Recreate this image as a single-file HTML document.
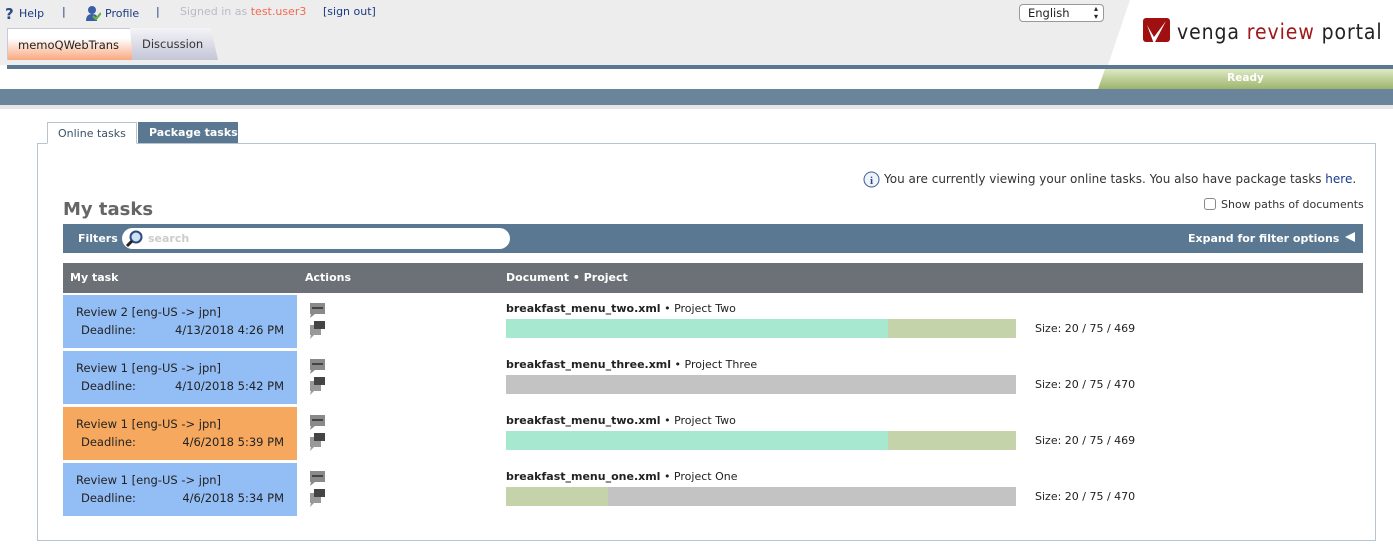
<!DOCTYPE html>
<html><head><meta charset="utf-8"><style>
*{margin:0;padding:0;box-sizing:border-box}
body{width:1393px;height:544px;overflow:hidden;background:#fff;font-family:"DejaVu Sans",Verdana,sans-serif;font-size:11px;color:#222;position:relative}
.a{position:absolute;white-space:nowrap}
.top{left:0;top:0;width:1393px;height:65px;background:#ededed}
.logoarea{left:1108px;top:0;width:285px;height:65px;background:#fff;clip-path:polygon(22px 0,100% 0,100% 100%,0 100%)}
.link{font-size:11px;color:#1a3a80}
.row{left:63px;width:234px;height:53px;background:#93bdf5;font-size:11.5px;color:#222}
.row .t{position:absolute;left:13px;top:10px}
.row .d{position:absolute;left:18px;top:28px}
.row .dt{position:absolute;right:13px;top:28px}
.doc{left:506px;font-size:11px}
.bar{left:506px;width:510px;height:19px;background:#c3c3c3}
.size{left:1035px;font-size:11px}
</style></head><body>
<div class="a top"></div>
<div class="a logoarea"></div>
<div class="a" style="left:5px;top:5px;font:bold 15px 'DejaVu Sans';color:#2a4a8a">?</div>
<div class="a link" style="left:19px;top:7px">Help</div>
<div class="a link" style="left:62px;top:5px">|</div>
<svg class="a" style="left:85px;top:5px" width="16" height="16"><circle cx="7" cy="5" r="4" fill="#3a5ea8"/><path d="M1 16 Q1 9 7 9 Q12 9 12 12 L12 16Z" fill="#3a5ea8"/><path d="M8 11 l3 3 l5 -6" stroke="#6ab040" stroke-width="2.2" fill="none"/></svg>
<div class="a link" style="left:105px;top:7px">Profile</div>
<div class="a link" style="left:156px;top:5px">|</div>
<div class="a" style="left:180px;top:5px;color:#b8bcc4">Signed in as <span style="color:#f06a50">test.user3</span></div>
<div class="a link" style="left:323px;top:5px">[sign out]</div>
<div class="a" style="left:7px;top:28px;width:126px;height:32px;background:linear-gradient(#fff 30%,#f9a880);border:1px solid #c9c9d9;border-bottom:none;font-size:11.5px;padding:9px 0 0 10px">memoQWebTrans</div>
<div class="a" style="left:130px;top:28px;width:88px;height:32px;background:linear-gradient(#f4f4f8,#c4c6d8);clip-path:polygon(0 0,92% 0,100% 100%,3% 100%);font-size:11.5px;padding:9px 0 0 12px;color:#333">Discussion</div>
<div class="a" style="left:1019px;top:4px;width:85px;height:18px;border:1px solid #999;border-radius:4px;background:#fff;font-size:11.5px;padding:1px 0 0 8px">English<span style="position:absolute;right:5px;top:0;font-size:8px;line-height:8px">▴<br>▾</span></div>
<svg class="a" style="left:1142px;top:17px" width="30" height="33"><rect x="1" y="1" width="27" height="24" rx="3" fill="#a01010"/><path d="M5 8 L12 20 L24 4 L12 27 Z" fill="#fff"/></svg>
<div class="a" style="left:1177px;top:20px;font:21px 'DejaVu Sans';letter-spacing:1px;color:#222;transform:scaleX(0.9);transform-origin:left">venga <span style="color:#a01818">review</span> portal</div>
<div class="a" style="left:7px;top:65px;width:1386px;height:4px;background:#5a7891"></div>
<div class="a" style="left:1098px;top:69px;width:295px;height:20px;background:linear-gradient(#dfe9c4,#9db56d);clip-path:polygon(7px 0,100% 0,100% 100%,0 100%);color:#fff;font-weight:bold;font-size:10.5px;text-align:center;padding-top:3px">Ready</div>
<div class="a" style="left:0;top:89px;width:1393px;height:16px;background:#6a849c"></div>
<div class="a" style="left:0;top:105px;width:1393px;height:4px;background:#e6e6e6"></div>
<div class="a" style="left:37px;top:143px;width:1339px;height:398px;border:1px solid #b7c3cf"></div>
<div class="a" style="left:47px;top:122px;width:90px;height:22px;border:1px solid #b7c3cf;border-bottom:1px solid #fff;background:#fff;color:#3a5268;font-size:11px;padding:4px 0 0 10px">Online tasks</div>
<div class="a" style="left:138px;top:122px;width:100px;height:21px;background:#5a7891;color:#fff;font-weight:bold;font-size:11px;padding:4px 0 0 11px">Package tasks</div>
<svg class="a" style="left:863px;top:171px" width="17" height="17"><circle cx="8.5" cy="8.5" r="7.5" fill="#eef3fa" stroke="#3a5a98"/><text x="8.5" y="13" font-size="11" font-weight="bold" text-anchor="middle" fill="#2a4a88" font-family="Liberation Serif">i</text></svg>
<div class="a" style="left:884px;top:172px;font-size:12px;color:#333">You are currently viewing your online tasks. You also have package tasks <span style="color:#1a3a90">here</span>.</div>
<div class="a" style="left:1204px;top:198px;width:12px;height:12px;border:1px solid #888;border-radius:3px"></div>
<div class="a" style="left:1221px;top:198px;font-size:11px;color:#333">Show paths of documents</div>
<div class="a" style="left:63px;top:199px;font:bold 18px 'DejaVu Sans';color:#666">My tasks</div>
<div class="a" style="left:63px;top:224px;width:1300px;height:29px;background:#5a7891"></div>
<div class="a" style="left:78px;top:232px;color:#fff;font-weight:bold;font-size:11px">Filters</div>
<div class="a" style="left:122px;top:228px;width:388px;height:21px;background:#fff;border-radius:11px;color:#ccc;font-weight:bold;font-size:11px;padding:4px 0 0 26px">search</div>
<svg class="a" style="left:125px;top:229px" width="19" height="19"><circle cx="11" cy="8" r="5.5" fill="#cfe0f5" stroke="#2a4a80" stroke-width="2"/><path d="M7 12 L2 17" stroke="#222" stroke-width="3"/></svg>
<div class="a" style="left:1188px;top:232px;color:#fff;font-weight:bold;font-size:11px">Expand for filter options</div>
<div class="a" style="left:1345px;top:232px;width:0;height:0;border-top:5px solid transparent;border-bottom:5px solid transparent;border-right:10px solid #fff"></div>
<div class="a" style="left:63px;top:263px;width:1300px;height:30px;background:#6b7177;color:#fff;font-weight:bold;font-size:11px"><span class="a" style="left:7px;top:8px">My task</span><span class="a" style="left:242px;top:8px">Actions</span><span class="a" style="left:443px;top:8px">Document • Project</span></div>

<div class="a row" style="top:295px"><span class="t">Review 2 [eng-US -&gt; jpn]</span><span class="d">Deadline:</span><span class="dt">4/13/2018 4:26 PM</span></div>
<div class="a row" style="top:351px"><span class="t">Review 1 [eng-US -&gt; jpn]</span><span class="d">Deadline:</span><span class="dt">4/10/2018 5:42 PM</span></div>
<div class="a row" style="top:407px;background:#f5a85e"><span class="t">Review 1 [eng-US -&gt; jpn]</span><span class="d">Deadline:</span><span class="dt">4/6/2018 5:39 PM</span></div>
<div class="a row" style="top:463px"><span class="t">Review 1 [eng-US -&gt; jpn]</span><span class="d">Deadline:</span><span class="dt">4/6/2018 5:34 PM</span></div>

<svg class="a" style="left:309px;top:302px" width="18" height="240">
<g id="g"><rect x="1" y="1" width="15" height="11" fill="#8a8a8a"/><rect x="3" y="5" width="11" height="2" fill="#444"/><path d="M2 12 L1 16 L6 12Z" fill="#8a8a8a"/>
<rect x="1" y="23" width="11" height="10" fill="#999"/><rect x="5" y="19" width="11" height="8" fill="#444"/><path d="M2 33 L1 37 L5 33Z" fill="#999"/></g>
<use href="#g" y="56"/><use href="#g" y="112"/><use href="#g" y="168"/></svg>

<div class="a doc" style="top:302px"><b>breakfast_menu_two.xml</b> • Project Two</div>
<div class="a bar" style="top:319px;background:linear-gradient(90deg,#a6e8d0 0 382px,#c5d3ab 382px)"></div>
<div class="a size" style="top:322px">Size: 20 / 75 / 469</div>
<div class="a doc" style="top:358px"><b>breakfast_menu_three.xml</b> • Project Three</div>
<div class="a bar" style="top:375px"></div>
<div class="a size" style="top:378px">Size: 20 / 75 / 470</div>
<div class="a doc" style="top:414px"><b>breakfast_menu_two.xml</b> • Project Two</div>
<div class="a bar" style="top:431px;background:linear-gradient(90deg,#a6e8d0 0 382px,#c5d3ab 382px)"></div>
<div class="a size" style="top:434px">Size: 20 / 75 / 469</div>
<div class="a doc" style="top:470px"><b>breakfast_menu_one.xml</b> • Project One</div>
<div class="a bar" style="top:487px;background:linear-gradient(90deg,#c5d3ab 0 102px,#c3c3c3 102px)"></div>
<div class="a size" style="top:490px">Size: 20 / 75 / 470</div>
</body></html>
